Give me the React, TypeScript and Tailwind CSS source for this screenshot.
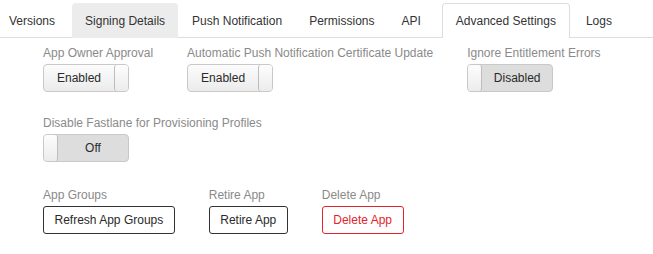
import React from "react";

const tabs = [
  "Versions",
  "Signing Details",
  "Push Notification",
  "Permissions",
  "API",
  "Advanced Settings",
  "Logs",
];

function Toggle({ on, label }: { on: boolean; label: string }) {
  return (
    <div
      className={`flex h-[28px] w-[86px] rounded-[4px] border border-[#c9c9c9] text-[12px] text-[#2a2a2a] ${
        on ? "bg-gradient-to-b from-[#fcfcfc] to-[#ebebeb]" : "bg-[#dddddd]"
      }`}
    >
      {!on && (
        <span className="h-full w-[14px] rounded-[3px] border-r border-[#bdbdbd] bg-gradient-to-b from-[#fdfdfd] to-[#ececec]" />
      )}
      <span className="flex flex-1 items-center justify-center">{label}</span>
      {on && (
        <span className="h-full w-[14px] rounded-[3px] border-l border-[#bdbdbd] bg-gradient-to-b from-[#fdfdfd] to-[#ececec]" />
      )}
    </div>
  );
}

function Field({ label, children }: { label: string; children: React.ReactNode }) {
  return (
    <div className="flex flex-col">
      <div className="mb-[3px] text-[12px] leading-[16px] text-[#8a8a8a]">{label}</div>
      {children}
    </div>
  );
}

function Btn({ children, danger }: { children: React.ReactNode; danger?: boolean }) {
  return (
    <button
      className={`h-[28px] rounded-[3px] border bg-white px-[10.5px] text-[12px] ${
        danger ? "border-[#e3242b] text-[#e3242b]" : "border-[#333] text-[#2a2a2a]"
      }`}
    >
      {children}
    </button>
  );
}

export default function App() {
  return (
    <div className="h-[254px] w-[653px] bg-white font-['Liberation_Sans',Arial,sans-serif]">
      <div className="flex h-[38px] items-end gap-[1px] border-b border-[#dddddd]">
        {tabs.map((t, i) => {
          const active = t === "Advanced Settings";
          const hover = t === "Signing Details";
          return (
            <div
              key={t}
              className={`-mb-px flex h-[35px] items-center px-[13px] text-[12px] text-[#333] ${
                i === 0 ? "-ml-[4px] mr-[3px]" : ""
              } ${
                active
                  ? "ml-[7px] mr-[2px] rounded-t-[4px] border border-b-0 border-[#dddddd] bg-white"
                  : hover
                  ? "rounded-t-[4px] bg-[#ececec]"
                  : ""
              }`}
            >
              {t}
            </div>
          );
        })}
      </div>
      <div className="flex flex-col pl-[43px] pt-[7px]">
        <div className="flex gap-[34px]">
          <Field label="App Owner Approval">
            <Toggle on label="Enabled" />
          </Field>
          <Field label="Automatic Push Notification Certificate Update">
            <Toggle on label="Enabled" />
          </Field>
          <Field label="Ignore Entitlement Errors">
            <Toggle on={false} label="Disabled" />
          </Field>
        </div>
        <div className="mt-[23px] flex gap-[34px]">
          <Field label="Disable Fastlane for Provisioning Profiles">
            <Toggle on={false} label="Off" />
          </Field>
        </div>
        <div className="mt-[25px] flex gap-[34px]">
          <Field label="App Groups">
            <div>
              <Btn>Refresh App Groups</Btn>
            </div>
          </Field>
          <Field label="Retire App">
            <div>
              <Btn>Retire App</Btn>
            </div>
          </Field>
          <Field label="Delete App">
            <div>
              <Btn danger>Delete App</Btn>
            </div>
          </Field>
        </div>
      </div>
    </div>
  );
}
